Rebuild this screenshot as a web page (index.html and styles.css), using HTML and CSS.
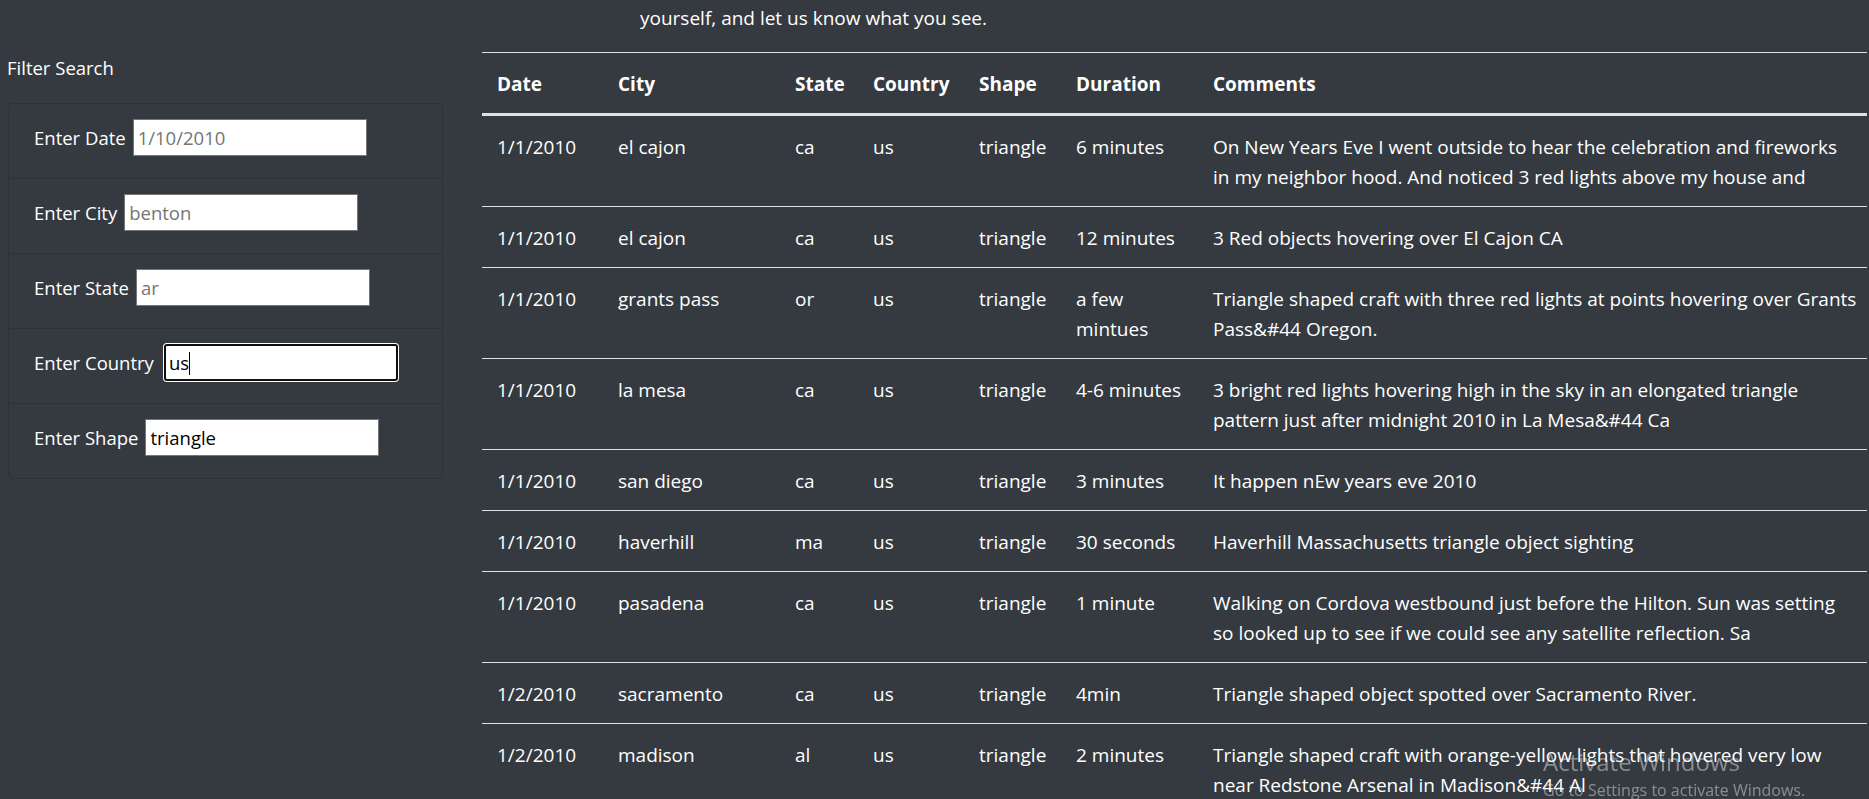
FILE: index.html
```html
<!DOCTYPE html>
<html lang="en">

<head>
    <meta charset="UTF-8">
    <meta name="viewport" content="width=device-width, initial-scale=1.0">
    <title>UFO Sightings</title>
    <link rel="stylesheet" href="styles.css">
</head>

<body>
    <p class="intro">yourself, and let us know what you see.</p>

    <div class="page">
        <aside class="sidebar">
            <div class="filter-title">Filter Search</div>
            <ul class="filter-list">
                <li class="filter-item">
                    <label for="datetime">Enter Date</label>
                    <input type="text" id="datetime" placeholder="1/10/2010">
                </li>
                <li class="filter-item">
                    <label for="city">Enter City</label>
                    <input type="text" id="city" placeholder="benton">
                </li>
                <li class="filter-item">
                    <label for="state">Enter State</label>
                    <input type="text" id="state" placeholder="ar">
                </li>
                <li class="filter-item">
                    <label for="country">Enter Country</label>
                    <span class="field">
                        <input type="text" id="country" class="focused" value="us">
                        <span class="caret"></span>
                    </span>
                </li>
                <li class="filter-item">
                    <label for="shape">Enter Shape</label>
                    <input type="text" id="shape" value="triangle">
                </li>
            </ul>
        </aside>

        <table class="ufo-table">
            <thead>
                <tr>
                    <th class="col-date">Date</th>
                    <th class="col-city">City</th>
                    <th class="col-state">State</th>
                    <th class="col-country">Country</th>
                    <th class="col-shape">Shape</th>
                    <th class="col-duration">Duration</th>
                    <th class="col-comments">Comments</th>
                </tr>
            </thead>
            <tbody>
                <tr>
                    <td>1/1/2010</td>
                    <td>el cajon</td>
                    <td>ca</td>
                    <td>us</td>
                    <td>triangle</td>
                    <td>6 minutes</td>
                    <td class="comment">On New Years Eve I went outside to hear the celebration and fireworks<br>in my neighbor hood. And noticed 3 red lights above my house and</td>
                </tr>
                <tr>
                    <td>1/1/2010</td>
                    <td>el cajon</td>
                    <td>ca</td>
                    <td>us</td>
                    <td>triangle</td>
                    <td>12 minutes</td>
                    <td class="comment">3 Red objects hovering over El Cajon CA</td>
                </tr>
                <tr>
                    <td>1/1/2010</td>
                    <td>grants pass</td>
                    <td>or</td>
                    <td>us</td>
                    <td>triangle</td>
                    <td>a few<br>mintues</td>
                    <td class="comment">Triangle shaped craft with three red lights at points hovering over Grants<br>Pass&amp;#44 Oregon.</td>
                </tr>
                <tr>
                    <td>1/1/2010</td>
                    <td>la mesa</td>
                    <td>ca</td>
                    <td>us</td>
                    <td>triangle</td>
                    <td>4-6 minutes</td>
                    <td class="comment">3 bright red lights hovering high in the sky in an elongated triangle<br>pattern just after midnight 2010 in La Mesa&amp;#44 Ca</td>
                </tr>
                <tr>
                    <td>1/1/2010</td>
                    <td>san diego</td>
                    <td>ca</td>
                    <td>us</td>
                    <td>triangle</td>
                    <td>3 minutes</td>
                    <td class="comment">It happen nEw years eve 2010</td>
                </tr>
                <tr>
                    <td>1/1/2010</td>
                    <td>haverhill</td>
                    <td>ma</td>
                    <td>us</td>
                    <td>triangle</td>
                    <td>30 seconds</td>
                    <td class="comment">Haverhill Massachusetts triangle object sighting</td>
                </tr>
                <tr>
                    <td>1/1/2010</td>
                    <td>pasadena</td>
                    <td>ca</td>
                    <td>us</td>
                    <td>triangle</td>
                    <td>1 minute</td>
                    <td class="comment">Walking on Cordova westbound just before the Hilton. Sun was setting<br>so looked up to see if we could see any satellite reflection. Sa</td>
                </tr>
                <tr>
                    <td>1/2/2010</td>
                    <td>sacramento</td>
                    <td>ca</td>
                    <td>us</td>
                    <td>triangle</td>
                    <td>4min</td>
                    <td class="comment">Triangle shaped object spotted over Sacramento River.</td>
                </tr>
                <tr>
                    <td>1/2/2010</td>
                    <td>madison</td>
                    <td>al</td>
                    <td>us</td>
                    <td>triangle</td>
                    <td>2 minutes</td>
                    <td class="comment">Triangle shaped craft with orange-yellow lights that hovered very low<br>near Redstone Arsenal in Madison&amp;#44 Al</td>
                </tr>
            </tbody>
        </table>
    </div>

    <div class="watermark">
        <div class="watermark-title">Activate Windows</div>
        <div class="watermark-text">Go to Settings to activate Windows.</div>
    </div>
</body>

</html>
```

FILE: styles.css
```css
html {
    overflow: hidden;
}

body {
    font-family: "Open Sans", sans-serif;
    font-size: 19px;
    line-height: 30px;
    background-color: #343a40;
    color: #fff;
    margin: 0;
}

.intro {
    margin: 0;
    padding: 3px 0 0 640px;
}

.page {
    display: flex;
    align-items: flex-start;
    gap: 39px;
    margin-top: 19px;
    padding-left: 8px;
}

/* sidebar */

.sidebar {
    width: 435px;
    flex-shrink: 0;
    font-size: 18.5px;
}

.filter-title {
    padding-top: 1px;
    margin-left: -1px;
}

.filter-list {
    list-style: none;
    margin: 20px 0 0;
    padding: 0;
    border: 1px solid rgba(0, 0, 0, 0.13);
    border-radius: 5px;
}

.filter-item {
    display: flex;
    align-items: center;
    gap: 7px;
    padding: 15px 20px 22px 25px;
}

.filter-item + .filter-item {
    border-top: 1px solid rgba(0, 0, 0, 0.13);
}

.filter-item input {
    width: 234px;
    height: 37px;
    box-sizing: border-box;
    padding: 0 4px;
    border: 1px solid #767676;
    border-radius: 0;
    background-color: #fff;
    color: #000;
    font-family: inherit;
    font-size: inherit;
    outline: none;
}

.filter-item input::placeholder {
    color: #757575;
}

.field {
    position: relative;
    display: flex;
    margin-left: 3px;
}

.filter-item input.focused {
    border: 2px solid #101010;
    border-radius: 3px;
    box-shadow: 0 0 0 1px #fff;
    padding-left: 3px;
}

.caret {
    position: absolute;
    left: 25px;
    top: 8px;
    width: 1px;
    height: 23px;
    background-color: #000;
}

/* table */

.ufo-table {
    width: 1385px;
    table-layout: fixed;
    border-collapse: collapse;
    color: #fff;
}

.ufo-table th,
.ufo-table td {
    padding: 16px 15px 14px;
    text-align: left;
    vertical-align: top;
    border-top: 1px solid #dee2e6;
}

.ufo-table th {
    font-weight: bold;
    border-bottom: 3px solid #dee2e6;
}

.ufo-table .comment {
    white-space: nowrap;
}

.col-date { width: 91px; }
.col-city { width: 147px; }
.col-state { width: 48px; }
.col-country { width: 76px; }
.col-shape { width: 67px; }
.col-duration { width: 107px; }
.col-comments { width: 639px; }

/* windows activation notice */

.watermark {
    position: fixed;
    left: 1543px;
    top: 745px;
    color: rgba(255, 255, 255, 0.42);
    pointer-events: none;
}

.watermark-title {
    font-size: 24px;
    line-height: 34px;
}

.watermark-text {
    font-size: 16px;
    line-height: 22px;
}
```
